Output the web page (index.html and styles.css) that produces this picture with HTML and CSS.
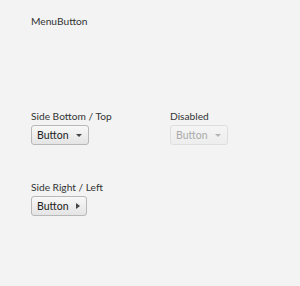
FILE: index.html
```html
<!DOCTYPE html>
<html lang="en">
<head>
    <meta charset="UTF-8">
    <title>MenuButton</title>
    <link rel="stylesheet" href="styles.css">
</head>
<body>
    <div class="page">
        <div class="title">MenuButton</div>

        <div class="row first-row">
            <div class="cell">
                <div class="label">Side Bottom / Top</div>
                <button class="menu-button">Button <span class="arrow down"></span></button>
            </div>
            <div class="cell">
                <div class="label">Disabled</div>
                <button class="menu-button" disabled>Button <span class="arrow down"></span></button>
            </div>
        </div>

        <div class="row second-row">
            <div class="cell">
                <div class="label">Side Right / Left</div>
                <button class="menu-button">Button <span class="arrow right"></span></button>
            </div>
        </div>
    </div>
</body>
</html>
```

FILE: styles.css
```css
html, body {
    margin: 0;
    padding: 0;
    background-color: #f2f3f2;
}
body {
    font-family: Lato, "Noto Sans", sans-serif;
    font-size: 10.2px;
    color: #333;
}
.page {
    width: 300px;
    height: 286px;
    box-sizing: border-box;
    padding: 14px 0 0 31px;
}
.title {
    line-height: 14px;
}
.row {
    display: flex;
}
.first-row {
    margin-top: 81px;
}
.second-row {
    margin-top: 35px;
}
.cell {
    flex: 0 0 139px;
}
.label {
    line-height: 14px;
    margin-bottom: 2px;
}
.menu-button {
    display: flex;
    align-items: center;
    gap: 7px;
    height: 20px;
    padding: 0 6px 0 5px;
    font-family: inherit;
    font-size: 10.5px;
    color: #222;
    background: linear-gradient(#f8f8f8, #e4e4e4);
    border: 1px solid #b8b8b8;
    border-radius: 3px;
}
.menu-button:disabled {
    opacity: 0.35;
}
.arrow {
    width: 0;
    height: 0;
}
.arrow.down {
    border-left: 3px solid transparent;
    border-right: 3px solid transparent;
    border-top: 3px solid #444;
}
.arrow.right {
    border-top: 3px solid transparent;
    border-bottom: 3px solid transparent;
    border-left: 4px solid #444;
}
```
